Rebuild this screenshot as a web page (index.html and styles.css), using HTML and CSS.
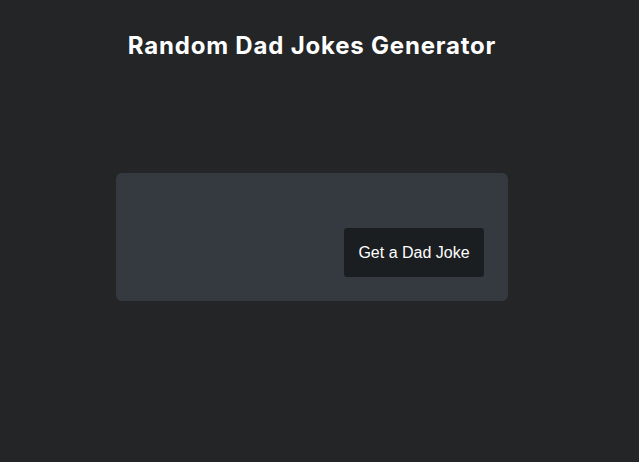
FILE: index.html
```html
<!DOCTYPE html>
<html>
<head>
<meta charset="utf-8">
<link rel="stylesheet" href="styles.css">
</head>
<body>
<main class="wrap">
  <h1 class="title">Random Dad Jokes Generator</h1>
  <section class="card">
    <p class="joke"></p>
    <div class="actions">
      <button class="btn">Get a Dad Joke</button>
    </div>
  </section>
</main>
</body>
</html>
```

FILE: styles.css
```css
html, body {
  margin: 0;
  padding: 0;
  background: #232527;
  height: 100%;
}
.wrap {
  width: 392px;
  margin-left: 116px;
  padding-top: 30px;
}
.title {
  margin: 0;
  text-align: center;
  font-family: Inter, "Noto Sans", sans-serif;
  font-weight: 700;
  font-size: 24px;
  line-height: 32px;
  color: #ffffff;
  letter-spacing: 0.8px;
}
.card {
  margin-top: 111px;
  background: #343a40;
  border-radius: 6px;
  height: 128px;
  box-sizing: border-box;
  padding: 55px 24px 23px;
  display: flex;
  flex-direction: column;
}
.joke {
  margin: 0;
}
.actions {
  display: flex;
  justify-content: flex-end;
}
.btn {
  width: 140px;
  height: 49px;
  background: #1b1e20;
  color: #ffffff;
  border: none;
  border-radius: 3px;
  font-family: "Liberation Sans", Arial, sans-serif;
  font-size: 16px;
  cursor: pointer;
}
```
